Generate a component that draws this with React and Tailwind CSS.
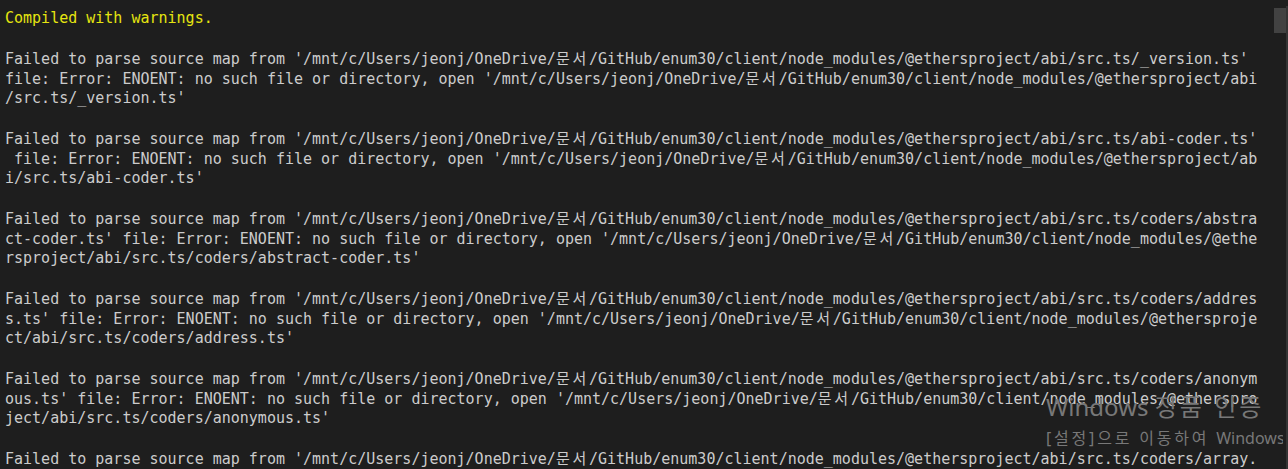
import React from "react";

const K = () => (
  <span className="font-['Noto_Sans_CJK_KR',sans-serif] tracking-[2.75px]">문서</span>
);

const P = "/mnt/c/Users/jeonj/OneDrive/";

function L({ children, className = "" }) {
  return <div className={"h-5 leading-5 whitespace-pre overflow-visible " + className}>{children}</div>;
}

export default function App() {
  const lines = [
    ["Failed to parse source map from '" + P, "/GitHub/enum30/client/node_modules/@ethersproject/abi/src.ts/_version.ts'"],
    ["file: Error: ENOENT: no such file or directory, open '" + P, "/GitHub/enum30/client/node_modules/@ethersproject/abi"],
    ["/src.ts/_version.ts'"],
    [""],
    ["Failed to parse source map from '" + P, "/GitHub/enum30/client/node_modules/@ethersproject/abi/src.ts/abi-coder.ts'"],
    [" file: Error: ENOENT: no such file or directory, open '" + P, "/GitHub/enum30/client/node_modules/@ethersproject/ab"],
    ["i/src.ts/abi-coder.ts'"],
    [""],
    ["Failed to parse source map from '" + P, "/GitHub/enum30/client/node_modules/@ethersproject/abi/src.ts/coders/abstra"],
    ["ct-coder.ts' file: Error: ENOENT: no such file or directory, open '" + P, "/GitHub/enum30/client/node_modules/@ethe"],
    ["rsproject/abi/src.ts/coders/abstract-coder.ts'"],
    [""],
    ["Failed to parse source map from '" + P, "/GitHub/enum30/client/node_modules/@ethersproject/abi/src.ts/coders/addres"],
    ["s.ts' file: Error: ENOENT: no such file or directory, open '" + P, "/GitHub/enum30/client/node_modules/@ethersproje"],
    ["ct/abi/src.ts/coders/address.ts'"],
    [""],
    ["Failed to parse source map from '" + P, "/GitHub/enum30/client/node_modules/@ethersproject/abi/src.ts/coders/anonym"],
    ["ous.ts' file: Error: ENOENT: no such file or directory, open '" + P, "/GitHub/enum30/client/node_modules/@etherspro"],
    ["ject/abi/src.ts/coders/anonymous.ts'"],
    [""],
    ["Failed to parse source map from '" + P, "/GitHub/enum30/client/node_modules/@ethersproject/abi/src.ts/coders/array."],
  ];
  return (
    <div className="relative w-[1288px] h-[469px] overflow-hidden bg-[#1e1e1e] flex">
      <div className="flex-1 pl-[5px] pt-[8px] font-['DejaVu_Sans_Mono',monospace] text-[15px] text-[#cccccc]">
        <L className="text-[#e5e510]">Compiled with warnings.</L>
        <L>{""}</L>
        {lines.map((l, i) => (
          <L key={i}>
            {l[0]}
            {l.length > 1 && <K />}
            {l.length > 1 && l[1]}
          </L>
        ))}
      </div>
      <div className="relative w-[14px] h-full">
        <div className="absolute left-0 top-[8px] w-[12px] h-[25px] bg-[#424242]" />
        <div className="absolute right-0 top-[6px] bottom-0 w-[2px] bg-[#343434]" />
      </div>
      <div className="absolute left-[1046px] top-[392px] w-[237px] overflow-hidden text-[#787878] font-['Noto_Sans','Noto_Sans_CJK_KR',sans-serif] whitespace-nowrap pointer-events-none">
        <div className="text-[24px] leading-[30px]">
          Windows <span className="tracking-[3px]">정품 인증</span>
        </div>
        <div className="text-[16px] leading-[22px] mt-[5px]">
          <span className="tracking-[2.8px]">[설정]으로 이동하여 </span>Windows를 정품 인증합니다.
        </div>
      </div>
    </div>
  );
}
